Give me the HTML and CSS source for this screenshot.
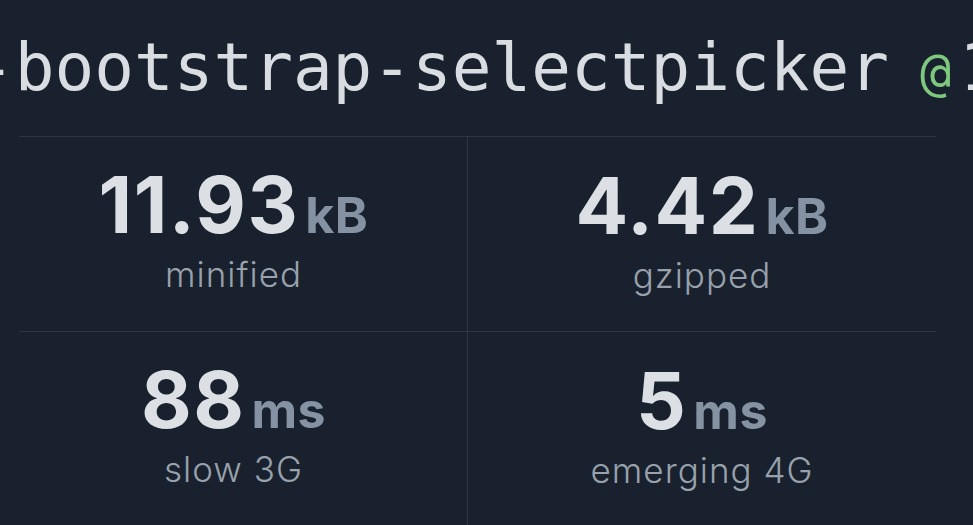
FILE: index.html
```html
<!DOCTYPE html>
<html lang="en">
<head>
    <meta charset="UTF-8">
    <meta name="viewport" content="width=device-width, initial-scale=1.0">
    <title>bootstrap-selectpicker</title>
    <link rel="stylesheet" href="styles.css">
</head>
<body>
    <!-- Package name -->
    <h1 class="package-name">-bootstrap-selectpicker<span class="at">@</span>1.0.0</h1>

    <!-- Stats -->
    <div class="stats">
        <div class="stat left">
            <div class="stat-value">11.93<span class="unit">kB</span></div>
            <div class="stat-label">minified</div>
        </div>
        <div class="stat right">
            <div class="stat-value">4.42<span class="unit">kB</span></div>
            <div class="stat-label">gzipped</div>
        </div>
        <div class="stat left">
            <div class="stat-value">88<span class="unit">ms</span></div>
            <div class="stat-label">slow 3G</div>
        </div>
        <div class="stat right">
            <div class="stat-value">5<span class="unit">ms</span></div>
            <div class="stat-label">emerging 4G</div>
        </div>
    </div>
</body>
</html>
```

FILE: styles.css
```css
html, body {
    margin: 0;
    height: 100%;
    overflow: hidden;
}
body {
    background-color: #18212d;
    color: #dcdfe4;
    font-family: Inter, "Liberation Sans", sans-serif;
}
.package-name {
    margin: 0 0 0 -25px;
    height: 136px;
    padding-top: 28px;
    box-sizing: border-box;
    font-family: "DejaVu Sans Mono", monospace;
    font-size: 66px;
    font-weight: normal;
    line-height: 80px;
    white-space: nowrap;
    color: #d9dce1;
}
.at {
    color: #7ec87e;
    font-size: 52px;
    margin: 0 8px 0 31px;
}
.stats {
    display: grid;
    grid-template-columns: 468px 468px;
    grid-auto-rows: 195px;
}
.stat {
    display: flex;
    flex-direction: column;
    align-items: center;
    padding-top: 24px;
    box-sizing: border-box;
}
.stat.left {
    border-right: 1px solid #2b3543;
    background: linear-gradient(#2b3543, #2b3543) 19px 0 / calc(100% - 19px) 1px no-repeat;
}
.stat.right {
    border-top: 1px solid #2b3543;
}
.stat-value {
    font-size: 78px;
    font-weight: 700;
    line-height: 90px;
    letter-spacing: 1.5px;
}
.unit {
    font-size: 50px;
    line-height: 1;
    color: #8592a3;
    margin-left: 6px;
    letter-spacing: 0.5px;
}
.stat-label {
    margin-top: 4px;
    font-size: 35px;
    font-weight: 300;
    color: #98a1ac;
    line-height: 40px;
    letter-spacing: 1px;
}
```
